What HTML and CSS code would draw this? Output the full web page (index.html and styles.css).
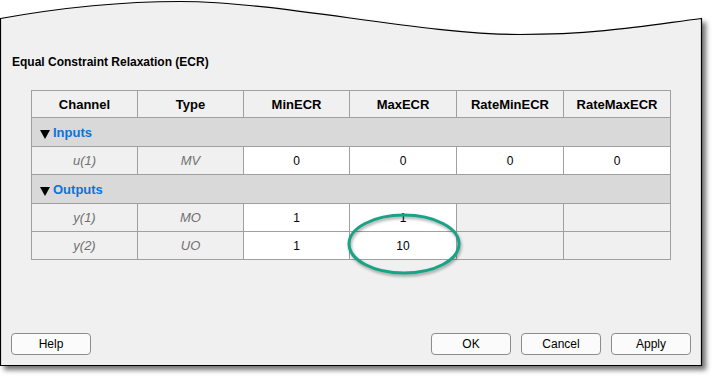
FILE: index.html
```html
<!DOCTYPE html>
<html lang="en">
<head>
    <meta charset="UTF-8">
    <title>Equal Constraint Relaxation (ECR)</title>
    <link rel="stylesheet" href="styles.css">
</head>
<body>
    <div class="page">
        <!-- torn dialog frame -->
        <svg class="frame" width="717" height="381" viewBox="0 0 717 381">
            <path d="M0.5,18.5 C70,6 130,1.5 180,1.5 C280,1.5 420,34.5 520,34.5 C600,34.5 650,25 701.5,18.5 V365.5 H0.5 Z"
                  fill="#f0f0f0" stroke="#000" stroke-width="1.2"/>
        </svg>

        <div class="dialog">
            <div class="title">Equal Constraint Relaxation (ECR)</div>

            <div class="grid">
                <div class="cell head">Channel</div>
                <div class="cell head">Type</div>
                <div class="cell head">MinECR</div>
                <div class="cell head">MaxECR</div>
                <div class="cell head">RateMinECR</div>
                <div class="cell head">RateMaxECR</div>

                <div class="group"><span class="caret"></span>Inputs</div>

                <div class="cell name">u(1)</div>
                <div class="cell name">MV</div>
                <div class="cell value">0</div>
                <div class="cell value">0</div>
                <div class="cell value">0</div>
                <div class="cell value">0</div>

                <div class="group"><span class="caret"></span>Outputs</div>

                <div class="cell name">y(1)</div>
                <div class="cell name">MO</div>
                <div class="cell value">1</div>
                <div class="cell value">1</div>
                <div class="cell empty"></div>
                <div class="cell empty"></div>

                <div class="cell name">y(2)</div>
                <div class="cell name">UO</div>
                <div class="cell value">1</div>
                <div class="cell value">10</div>
                <div class="cell empty"></div>
                <div class="cell empty"></div>
            </div>

            <div class="buttons">
                <button class="btn">Help</button>
                <div class="spacer"></div>
                <button class="btn">OK</button>
                <button class="btn">Cancel</button>
                <button class="btn">Apply</button>
            </div>
        </div>

        <!-- annotation around MaxECR of y(2) -->
        <svg class="mark" width="120" height="68" viewBox="0 0 120 68">
            <ellipse cx="58" cy="31" rx="55" ry="29" fill="none" stroke="#17a386" stroke-width="3"/>
        </svg>
    </div>
</body>
</html>
```

FILE: styles.css
```css
body {
    margin: 0;
    background: #fff;
    font-family: "Liberation Sans", Arial, sans-serif;
    font-size: 12px;
    color: #000;
}
.page {
    position: relative;
    width: 717px;
    height: 381px;
    overflow: hidden;
}
.frame {
    position: absolute;
    left: 0;
    top: 0;
    filter: drop-shadow(4px 4px 2.5px rgba(0,0,0,0.55));
}
.dialog {
    position: relative;
    width: 702px;
    height: 366px;
    box-sizing: border-box;
    padding: 55px 11px 11px 11px;
    display: flex;
    flex-direction: column;
}
.title {
    font-weight: bold;
    line-height: 14px;
    padding-left: 1px;
}
.grid {
    margin: 21px 0 0 20px;
    width: 640px;
    box-sizing: border-box;
    padding: 1px;
    background: #a0a0a0;
    display: grid;
    grid-template-columns: 105px 105px 105px 106px 106px 106px;
    grid-template-rows: 26px 28px 27px 28px 27px 27px;
    gap: 1px;
}
.cell {
    display: flex;
    align-items: center;
    justify-content: center;
    font-size: 13px;
}
.head {
    background: #f0f0f0;
    font-weight: bold;
}
.name {
    background: #f0f0f0;
    color: #707070;
    font-style: italic;
}
.value {
    background: #fff;
    font-size: 12px;
}
.empty {
    background: #f0f0f0;
}
.group {
    grid-column: 1 / -1;
    background: #d9d9d9;
    color: #0a74da;
    font-weight: bold;
    font-size: 13px;
    display: flex;
    align-items: center;
    padding-left: 8px;
}
.caret {
    width: 0;
    height: 0;
    border-left: 5px solid transparent;
    border-right: 5px solid transparent;
    border-top: 9px solid #000;
    margin: 5px 3px 0 0;
}
.buttons {
    margin-top: auto;
    display: flex;
    gap: 10px;
}
.spacer {
    flex: 1;
}
.btn {
    width: 80px;
    height: 22px;
    border: 1px solid #8c8c8c;
    border-radius: 4px;
    background: #fbfbfb;
    font-family: "Liberation Sans", Arial, sans-serif;
    font-size: 12px;
    color: #000;
    padding: 0;
}
.mark {
    position: absolute;
    left: 346px;
    top: 213px;
    filter: drop-shadow(1px 2px 1.5px rgba(0,0,0,0.35));
}
```
